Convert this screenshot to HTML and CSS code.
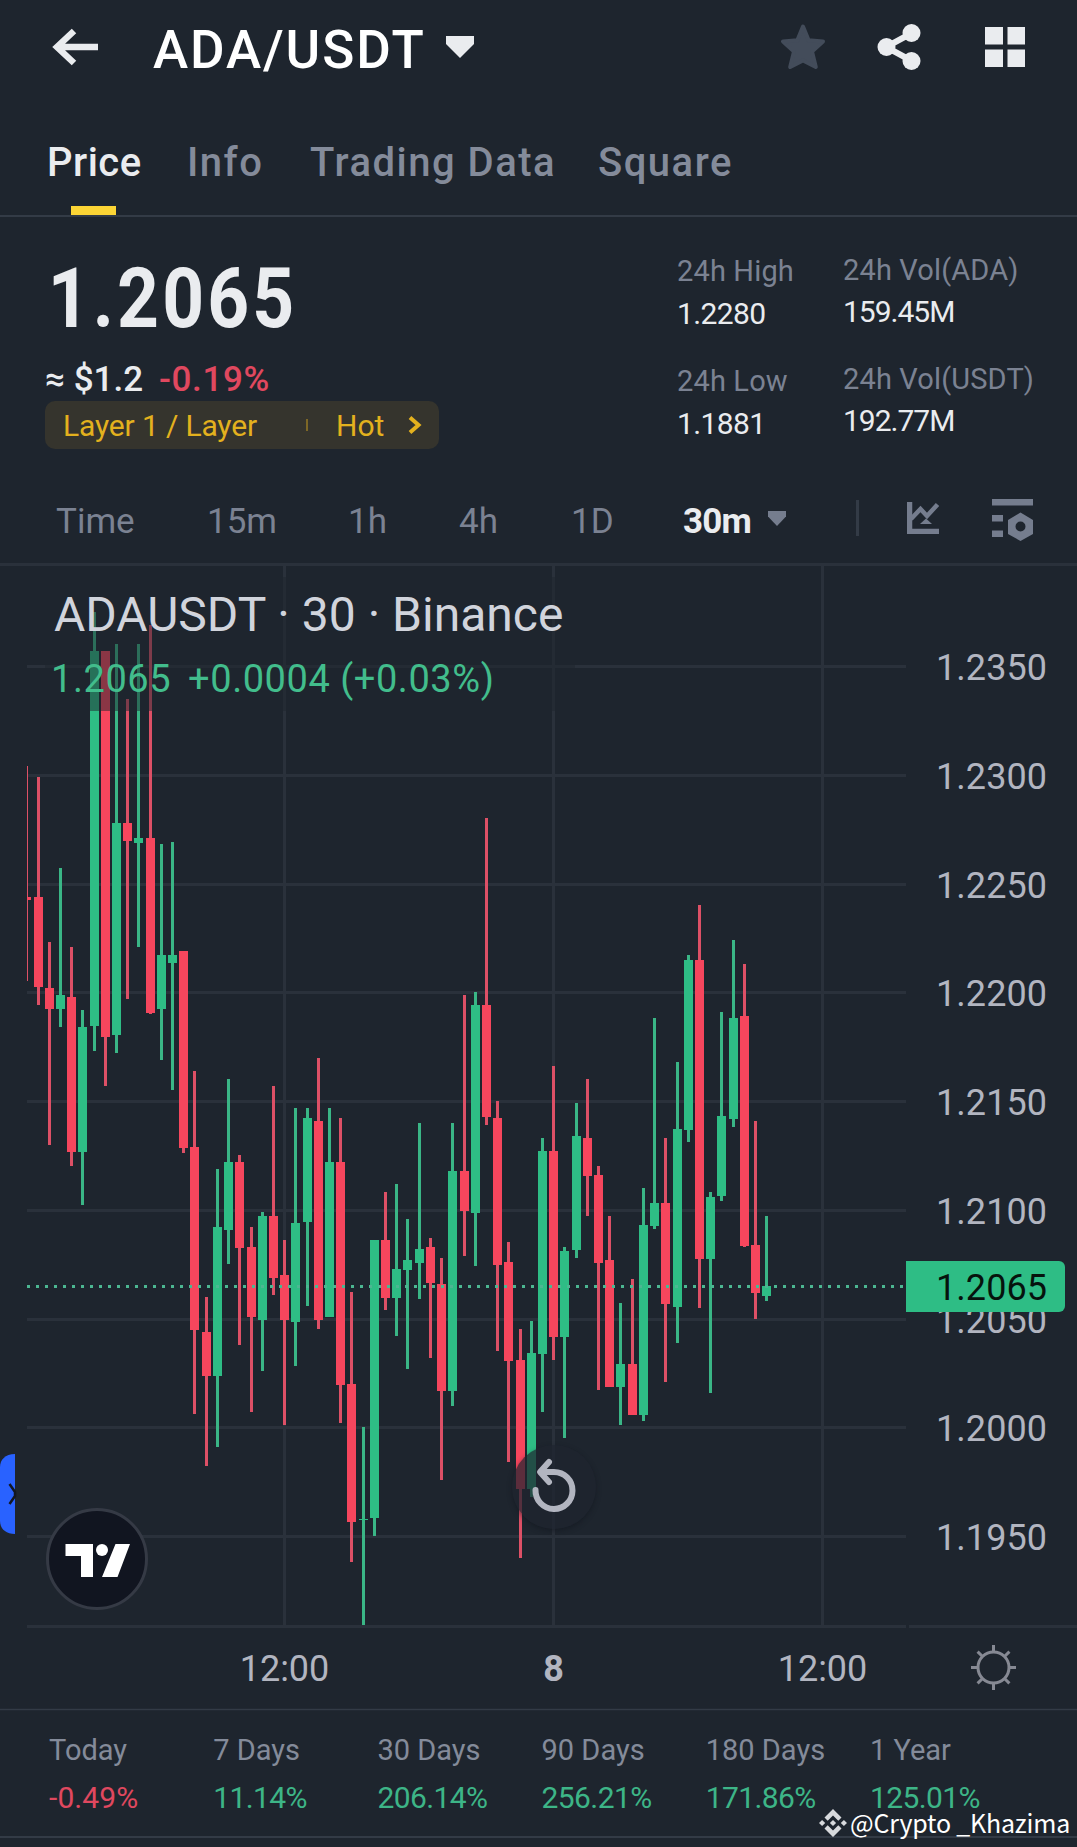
FILE: index.html
```html
<!DOCTYPE html>
<html lang="en">
<head>
  <meta charset="UTF-8" />
  <meta name="viewport" content="width=device-width, initial-scale=1.0"/>
  <title>ADA/USDT</title>
  <link rel="stylesheet" href="styles.css">
</head>
<body>
  <header class="topbar">
    <svg class="back" width="48" height="38" viewBox="0 0 48 38"><path d="M22 3 5 19l17 16M5 19h41" fill="none" stroke="#eaecef" stroke-width="6.5"/></svg>
    <h1>ADA/USDT</h1>
    <svg class="caret" width="28" height="22" viewBox="0 0 28 22"><path d="M0 0h28v8L14 22 0 8z" fill="#eaecef"/></svg>
    <div class="actions">
      <svg width="46" height="48" viewBox="0 0 46 48"><path d="M23 3.500l5.600 13.700 14.400 1.200-11 10 3.800 15.600L23 37.500 10.200 44 14 28.400 3 18.400l14.400-1.200z" fill="#434c5a" stroke="#434c5a" stroke-width="4" stroke-linejoin="round"/></svg>
      <svg width="44" height="48" viewBox="0 0 44 48"><path d="M35 10 9 24l26 14" fill="none" stroke="#eaecef" stroke-width="6"/><circle cx="9.500" cy="24" r="9" fill="#eaecef"/><circle cx="34.500" cy="10" r="9" fill="#eaecef"/><circle cx="34.500" cy="38" r="9" fill="#eaecef"/></svg>
      <svg width="40" height="40" viewBox="0 0 40 40"><path d="M0 0h18v17.500H0zM22.500 0H40v17.500H22.500zM0 22.500h18V40H0zM22.500 22.500H40V40H22.500z" fill="#eaecef"/></svg>
    </div>
  </header>

  <nav class="tabs">
    <a class="active">Price</a>
    <a>Info</a>
    <a>Trading Data</a>
    <a>Square</a>
  </nav>

  <section class="summary">
    <div class="price-box">
      <div class="price">1.2065</div>
      <div class="change"><span>≈ $1.2</span><span class="down">-0.19%</span></div>
      <div class="tags">
        <span class="tag-layer">Layer 1 / Layer</span>
        <i></i>
        <span class="tag-hot">Hot</span>
        <svg width="14" height="18" viewBox="0 0 14 18"><path d="M2 1.500 10.500 9 2 16.500" fill="none" stroke="#e3b11e" stroke-width="4"/></svg>
      </div>
    </div>
    <div class="stats">
      <div class="label">24h High</div>
      <div class="value">1.2280</div>
      <div class="label">24h Low</div>
      <div class="value">1.1881</div>
    </div>
    <div class="stats volume">
      <div class="label">24h Vol(ADA)</div>
      <div class="value">159.45M</div>
      <div class="label">24h Vol(USDT)</div>
      <div class="value">192.77M</div>
    </div>
  </section>

  <div class="intervals">
    <span>Time</span>
    <span>15m</span>
    <span>1h</span>
    <span>4h</span>
    <span>1D</span>
    <span class="selected">30m</span>
    <svg width="20" height="15" viewBox="0 0 20 15"><path d="M1 0h18v5.500L10 15 1 5.500z" fill="#757d8e"/></svg>
    <i></i>
    <svg width="32" height="32" viewBox="0 0 32 32"><path d="M2.500 0v29.500H32" fill="none" stroke="#757d8e" stroke-width="5.500"/><path d="M4 17 13.500 7l6.500 7L30.500 2.500" fill="none" stroke="#757d8e" stroke-width="4.500"/><path d="M19 16.500l6 5.500H13z" fill="#757d8e"/></svg>
    <svg width="41" height="43" viewBox="0 0 41 43"><path d="M0 1h41v6.500H0zM0 17h11v6.500H0zM0 32.500h11V39H0z" fill="#757d8e"/><path fill-rule="evenodd" d="M28.500 14.500 41 22v14l-12.500 7L16 36V22zM28.500 23.500a5 5 0 1 0 0 10 5 5 0 0 0 0-10z" fill="#757d8e"/></svg>
  </div>

  <div class="chart">
    <svg id="plot" width="1077" height="1145" viewBox="0 565 1077 1145"></svg>
    <div class="legend">
      <div class="symbol">ADAUSDT · 30 · Binance</div>
      <div class="quote"><span>1.2065</span><span>+0.0004 (+0.03%)</span></div>
    </div>
    <svg class="drawer" width="15" height="80" viewBox="0 0 15 80"><path d="M15 0C5 0 0 6 0 13v54c0 7 5 13 15 13z" fill="#2962ff"/><path d="M9.500 30 15 38v4l-5.500 8" fill="none" stroke="#131722" stroke-width="2.500"/></svg>
    <svg class="tv-logo" width="102" height="102" viewBox="0 0 102 102"><circle cx="51" cy="51" r="49.500" fill="#111520" stroke="#353a45" stroke-width="3"/><path d="M19.500 36H47v33H35V48H19.500zM69.500 36H84L71.500 69H56z" fill="#fff"/><circle cx="56" cy="42" r="6" fill="#fff"/></svg>
    <button class="reset"><svg width="84" height="84" viewBox="0 0 84 84"><path d="M23.500 45a18.500 18.500 0 1 0 18.500-18H29M37 17l-9 10 9 10" fill="none" stroke="#b2b5c0" stroke-width="6" stroke-linecap="round" stroke-linejoin="round"/></svg></button>
  </div>

  <section class="periods">
    <div><p>Today</p><b class="down">-0.49%</b></div>
    <div><p>7 Days</p><b>11.14%</b></div>
    <div><p>30 Days</p><b>206.14%</b></div>
    <div><p>90 Days</p><b>256.21%</b></div>
    <div><p>180 Days</p><b>171.86%</b></div>
    <div><p>1 Year</p><b>125.01%</b></div>
  </section>

  <div class="credit">
    <svg width="28" height="28" viewBox="0 0 28 28"><path d="M14 0l8.500 8.500-3.200 3.200L14 6.400l-5.300 5.300-3.200-3.200zM14 28l8.500-8.500-3.200-3.200-5.300 5.300-5.300-5.300-3.200 3.200zM14 10.900l3.100 3.100-3.100 3.100-3.100-3.100zM3.100 10.900 6.200 14l-3.100 3.100L0 14zM24.900 10.900 28 14l-3.100 3.100-3.100-3.100z" fill="#d8dadd"/></svg>
    <span>@Crypto _Khazima</span>
  </div>

  <script>
    // x centre, high, body top, body bottom, low, direction
    const candles = [
      [38.5, 777, 897, 987, 1005, "r"], [49.5, 942, 988, 1009, 1145, "r"],
      [60.5, 868, 995, 1009, 1027, "g"], [71.5, 947, 997, 1152, 1166, "r"],
      [82.5, 1010, 1027, 1152, 1205, "g"], [94.5, 612, 651, 1026, 1051, "g"],
      [105.5, 651, 651, 1037, 1086, "r"], [116.5, 644, 823, 1035, 1053, "g"],
      [127.5, 699, 823, 841, 999, "r"], [138.5, 644, 838, 843, 947, "g"],
      [150.5, 625, 838, 1013, 1014, "r"], [161.5, 844, 955, 1009, 1060, "g"],
      [172.5, 842, 955, 963, 1090, "g"], [183.5, 951, 951, 1148, 1153, "r"],
      [194.5, 1071, 1147, 1330, 1414, "r"], [206.5, 1297, 1332, 1376, 1466, "r"],
      [217.5, 1169, 1227, 1376, 1447, "g"], [228.5, 1079, 1162, 1230, 1264, "g"],
      [239.5, 1155, 1162, 1248, 1345, "r"], [251.5, 1227, 1247, 1317, 1412, "r"],
      [262.5, 1212, 1216, 1320, 1371, "g"], [273.5, 1086, 1216, 1278, 1295, "r"],
      [284.5, 1240, 1275, 1320, 1425, "r"], [295.5, 1108, 1223, 1322, 1366, "g"],
      [307.5, 1108, 1118, 1222, 1306, "g"], [318.5, 1058, 1121, 1320, 1329, "r"],
      [329.5, 1108, 1162, 1317, 1317, "g"], [340.5, 1118, 1162, 1385, 1423, "r"],
      [351.5, 1292, 1384, 1522, 1562, "r"], [363.5, 1427, 1519, 1520, 1625, "g"],
      [374.5, 1240, 1240, 1518, 1536, "g"], [385.5, 1192, 1240, 1298, 1310, "r"],
      [396.5, 1184, 1269, 1298, 1336, "g"], [407.5, 1219, 1260, 1270, 1369, "g"],
      [419.5, 1123, 1249, 1263, 1299, "g"], [430.5, 1238, 1247, 1283, 1358, "r"],
      [441.5, 1258, 1284, 1391, 1480, "r"], [452.5, 1123, 1171, 1391, 1406, "g"],
      [464.5, 995, 1171, 1211, 1256, "r"], [475.5, 992, 1005, 1213, 1266, "g"],
      [486.5, 818, 1005, 1117, 1125, "r"], [497.5, 1101, 1118, 1265, 1351, "r"],
      [508.5, 1242, 1262, 1361, 1462, "r"], [520.5, 1329, 1360, 1489, 1558, "r"],
      [531.5, 1321, 1353, 1489, 1497, "g"], [542.5, 1138, 1151, 1354, 1412, "g"],
      [553.5, 1066, 1151, 1337, 1360, "r"], [564.5, 1247, 1251, 1337, 1438, "g"],
      [576.5, 1103, 1136, 1250, 1258, "g"], [587.5, 1079, 1138, 1176, 1216, "r"],
      [598.5, 1166, 1175, 1263, 1390, "r"], [609.5, 1216, 1260, 1387, 1387, "r"],
      [620.5, 1303, 1364, 1387, 1425, "g"], [632.5, 1279, 1364, 1415, 1415, "r"],
      [643.5, 1188, 1225, 1415, 1421, "g"], [654.5, 1018, 1203, 1226, 1229, "g"],
      [665.5, 1138, 1203, 1304, 1382, "r"], [677.5, 1062, 1129, 1307, 1343, "g"],
      [688.5, 955, 960, 1130, 1142, "g"], [699.5, 905, 960, 1259, 1308, "r"],
      [710.5, 1192, 1197, 1259, 1393, "g"], [721.5, 1012, 1116, 1196, 1201, "g"],
      [733.5, 940, 1018, 1119, 1127, "g"], [744.5, 964, 1016, 1246, 1247, "r"],
      [755.5, 1121, 1245, 1293, 1319, "r"], [766.5, 1216, 1286, 1296, 1301, "g"]
    ];
    const prices = [
      ["1.2350", 666.5], ["1.2300", 775.5], ["1.2250", 884.5], ["1.2200", 992.5], ["1.2150", 1101.5],
      ["1.2100", 1210.5], ["1.2050", 1319.5], ["1.2000", 1427.5], ["1.1950", 1536.5]
    ];
    const times = [["12:00", 284.5], ["8", 553.5], ["12:00", 822.5]];

    let out = "";
    prices.forEach(([text, y]) => {
      out += `<path class="grid" d="M27 ${y}H906"/>`;
      out += `<text class="axis" x="936" y="${y + 13}" textLength="111">${text}</text>`;
    });
    times.forEach(([text, x]) => {
      out += `<path class="grid" d="M${x} 566V1626"/>`;
      out += `<text class="axis time${text === "8" ? " day" : ""}" x="${x}" y="1681">${text}</text>`;
    });
    out += `<path class="grid" d="M0 564.500H1077M27 1626.500H906M909 1626.500H1077"/>`;
    out += `<path class="rule" d="M0 1709.500H1077"/>`;

    // first candle is cut off by the left edge of the plot
    out += `<path d="M27.500 766V981" stroke="#dd5066"/><path d="M27 898.500h4" stroke="#f6465d" stroke-width="3"/>`;
    candles.forEach(([x, high, top, bottom, low, dir]) => {
      out += `<rect class="wick ${dir}" x="${x - 1.5}" y="${high}" width="3" height="${low - high}"/>`;
      out += `<rect class="body ${dir}" x="${x - 4.5}" y="${top}" width="9" height="${bottom - top}"/>`;
    });

    out += `<path class="last" d="M27 1286.500H906"/>`;
    out += `<path d="M906 1261h153a6 6 0 0 1 6 6v39a6 6 0 0 1-6 6H906z" fill="#2ebd85"/>`;
    out += `<text class="axis badge" x="936" y="1300" textLength="111">1.2065</text>`;
    out += `<g transform="translate(993.500 1667.500)" class="gear"><circle r="15.500"/>`;
    for (let a = 0; a < 360; a += 45) {
      out += `<path d="M0 -15.500V-22.500" transform="rotate(${a})"/>`;
    }
    out += `</g>`;
    document.getElementById("plot").innerHTML = out;
  </script>
</body>
</html>
```
FILE: styles.css
```css
body {
  margin: 0;
  width: 1077px;
  height: 1847px;
  overflow: hidden;
  background: #1e252e;
  color: #eaecef;
  font-family: Roboto, sans-serif;
}

.topbar {
  display: flex;
  align-items: center;
  height: 94px;
  padding: 0 52px 0 52px;
}

h1 {
  margin: 0 0 0 53px;
  padding-top: 6px;
  width: 293px;
  color: #fff;
  font-size: 53px;
  font-weight: 500;
  letter-spacing: 1.9px;
  white-space: nowrap;
}

.actions {
  display: flex;
  align-items: center;
  margin-left: auto;
}

.actions svg:nth-child(2) {
  margin: 0 64px 0 51px;
}

.tabs {
  display: grid;
  grid-template-columns: 140px 123px 288px 160px;
  height: 121px;
  padding-left: 47px;
  border-bottom: 2px solid #333b46;
}

.tabs a {
  position: relative;
  padding-top: 16px;
  line-height: 105px;
  font-size: 40px;
  font-weight: 500;
  letter-spacing: 1.5px;
  color: #848b9a;
  white-space: nowrap;
}

.tabs .active {
  color: #eaecef;
  letter-spacing: 0.5px;
}

.tabs .active::after {
  content: "";
  position: absolute;
  left: 24px;
  bottom: 0;
  width: 45px;
  height: 9px;
  background: #fcd535;
}

.summary {
  display: flex;
  height: 232px;
}

.price-box {
  width: 633px;
  box-sizing: border-box;
  flex: 0 0 677px;
  padding: 42px 0 0 45px;
}

.price {
  line-height: 80px;
  padding-left: 3px;
  font-size: 83px;
  font-weight: 700;
  letter-spacing: 3.6px;
  transform: scaleX(0.88);
  transform-origin: left;
}

.change {
  display: flex;
  gap: 16px;
  margin-top: 18px;
  line-height: 46px;
  height: 44px;
  font-size: 35px;
  font-weight: 500;
}

.change .down {
  letter-spacing: 0.6px;
}

.down {
  color: #e0485f;
}

.tags {
  display: flex;
  align-items: center;
  box-sizing: border-box;
  width: 394px;
  height: 48px;
  padding-left: 18px;
  border-radius: 10px;
  background: #35342d;
  color: #e3b11e;
  font-size: 30px;
}

.tag-layer {
  width: 243px;
  letter-spacing: -0.15px;
}

.tags i {
  width: 2px;
  height: 12px;
  background: #7d6726;
}

.tag-hot {
  width: 72px;
  margin-left: 28px;
}

.stats {
  width: 166px;
  padding-top: 33px;
  white-space: nowrap;
}

.volume {
  padding-top: 32px;
}

.label {
  line-height: 42px;
  font-size: 29px;
  letter-spacing: 0.15px;
  color: #7b8292;
}

.value {
  margin: 1px 0 25px;
  line-height: 42px;
  font-size: 30px;
  letter-spacing: -0.6px;
}

.volume .value {
  margin: 0 0 25px;
  letter-spacing: -1px;
}

.intervals {
  display: flex;
  align-items: center;
  height: 89px;
  margin-top: 27px;
  padding-left: 56px;
  font-size: 35px;
  color: #7b8292;
}

.intervals span {
  padding-top: 2px;
}

.intervals span:nth-child(1) { width: 151px; }
.intervals span:nth-child(2) { width: 141px; }
.intervals span:nth-child(3) { width: 111px; }
.intervals span:nth-child(4) { width: 112px; }
.intervals span:nth-child(5) { width: 112px; }

.intervals .selected {
  width: 84px;
  color: #eaecef;
  font-weight: 700;
  letter-spacing: -0.8px;
}

.intervals svg {
  margin-bottom: 5px;
}

.intervals i {
  width: 3px;
  height: 36px;
  margin: 0 48px 6px 69px;
  background: #333b46;
}

.intervals svg:last-child {
  margin: 0 0 3px 53px;
}

.chart {
  position: relative;
  height: 1145px;
}

.chart svg {
  display: block;
  overflow: visible;
}

.grid {
  stroke: #2a313b;
  stroke-width: 3;
  fill: none;
}

.rule {
  stroke: #333b46;
  stroke-width: 1.5;
}

.wick.g { fill: #3ab686; }
.wick.r { fill: #dd5066; }
.body.g { fill: #2ebd85; }
.body.r { fill: #f6465d; }

.last {
  stroke: #4cb792;
  stroke-width: 3;
  stroke-dasharray: 3 6;
}

.axis {
  font-size: 36px;
  fill: #b2b5c0;
}

.time {
  text-anchor: middle;
}

.day {
  font-weight: 700;
}

.badge {
  fill: #06130d;
}

.gear {
  fill: none;
  stroke: #868993;
  stroke-width: 3;
}

/* the legend dims the candles behind it */
.legend {
  position: absolute;
  left: 45px;
  top: 12px;
  width: 530px;
  height: 134px;
  background: rgba(30, 37, 46, 0.5);
  white-space: nowrap;
}

.symbol {
  padding: 10px 0 0 9px;
  line-height: 56px;
  font-size: 48px;
  color: #d1d4dc;
}

.quote {
  display: flex;
  gap: 17px;
  padding: 11px 0 0 6px;
  line-height: 50px;
  font-size: 38px;
  letter-spacing: 0.55px;
  color: #42bd8c;
}

.drawer {
  position: absolute;
  left: 0;
  top: 889px;
}

.tv-logo {
  position: absolute;
  left: 46px;
  top: 943px;
}

.reset {
  position: absolute;
  left: 512px;
  top: 880px;
  width: 84px;
  height: 84px;
  padding: 0;
  border: none;
  border-radius: 50%;
  background: rgba(31, 36, 47, 0.72);
  box-shadow: 0 2px 5px rgba(16, 20, 28, 0.5);
}

.periods {
  display: grid;
  grid-template-columns: repeat(6, 164.2px);
  height: 106px;
  padding: 20px 0 0 49px;
  border-bottom: 2px solid #333b46;
}

.periods p {
  margin: 0 0 8px;
  line-height: 40px;
  font-size: 29px;
  color: #848b9a;
}

.periods b {
  display: block;
  line-height: 40px;
  font-size: 30px;
  font-weight: 400;
  letter-spacing: -0.6px;
  color: #3db587;
}

.periods .down {
  color: #e0485f;
  letter-spacing: 0.1px;
}

.credit {
  position: absolute;
  left: 819px;
  top: 1803px;
  display: flex;
  align-items: center;
  gap: 3px;
  height: 40px;
  color: #fff;
  font-family: "Noto Sans CJK SC", sans-serif;
  font-size: 25px;
  letter-spacing: -0.2px;
  white-space: nowrap;
}

.credit span {
  padding-bottom: 3px;
}
```
